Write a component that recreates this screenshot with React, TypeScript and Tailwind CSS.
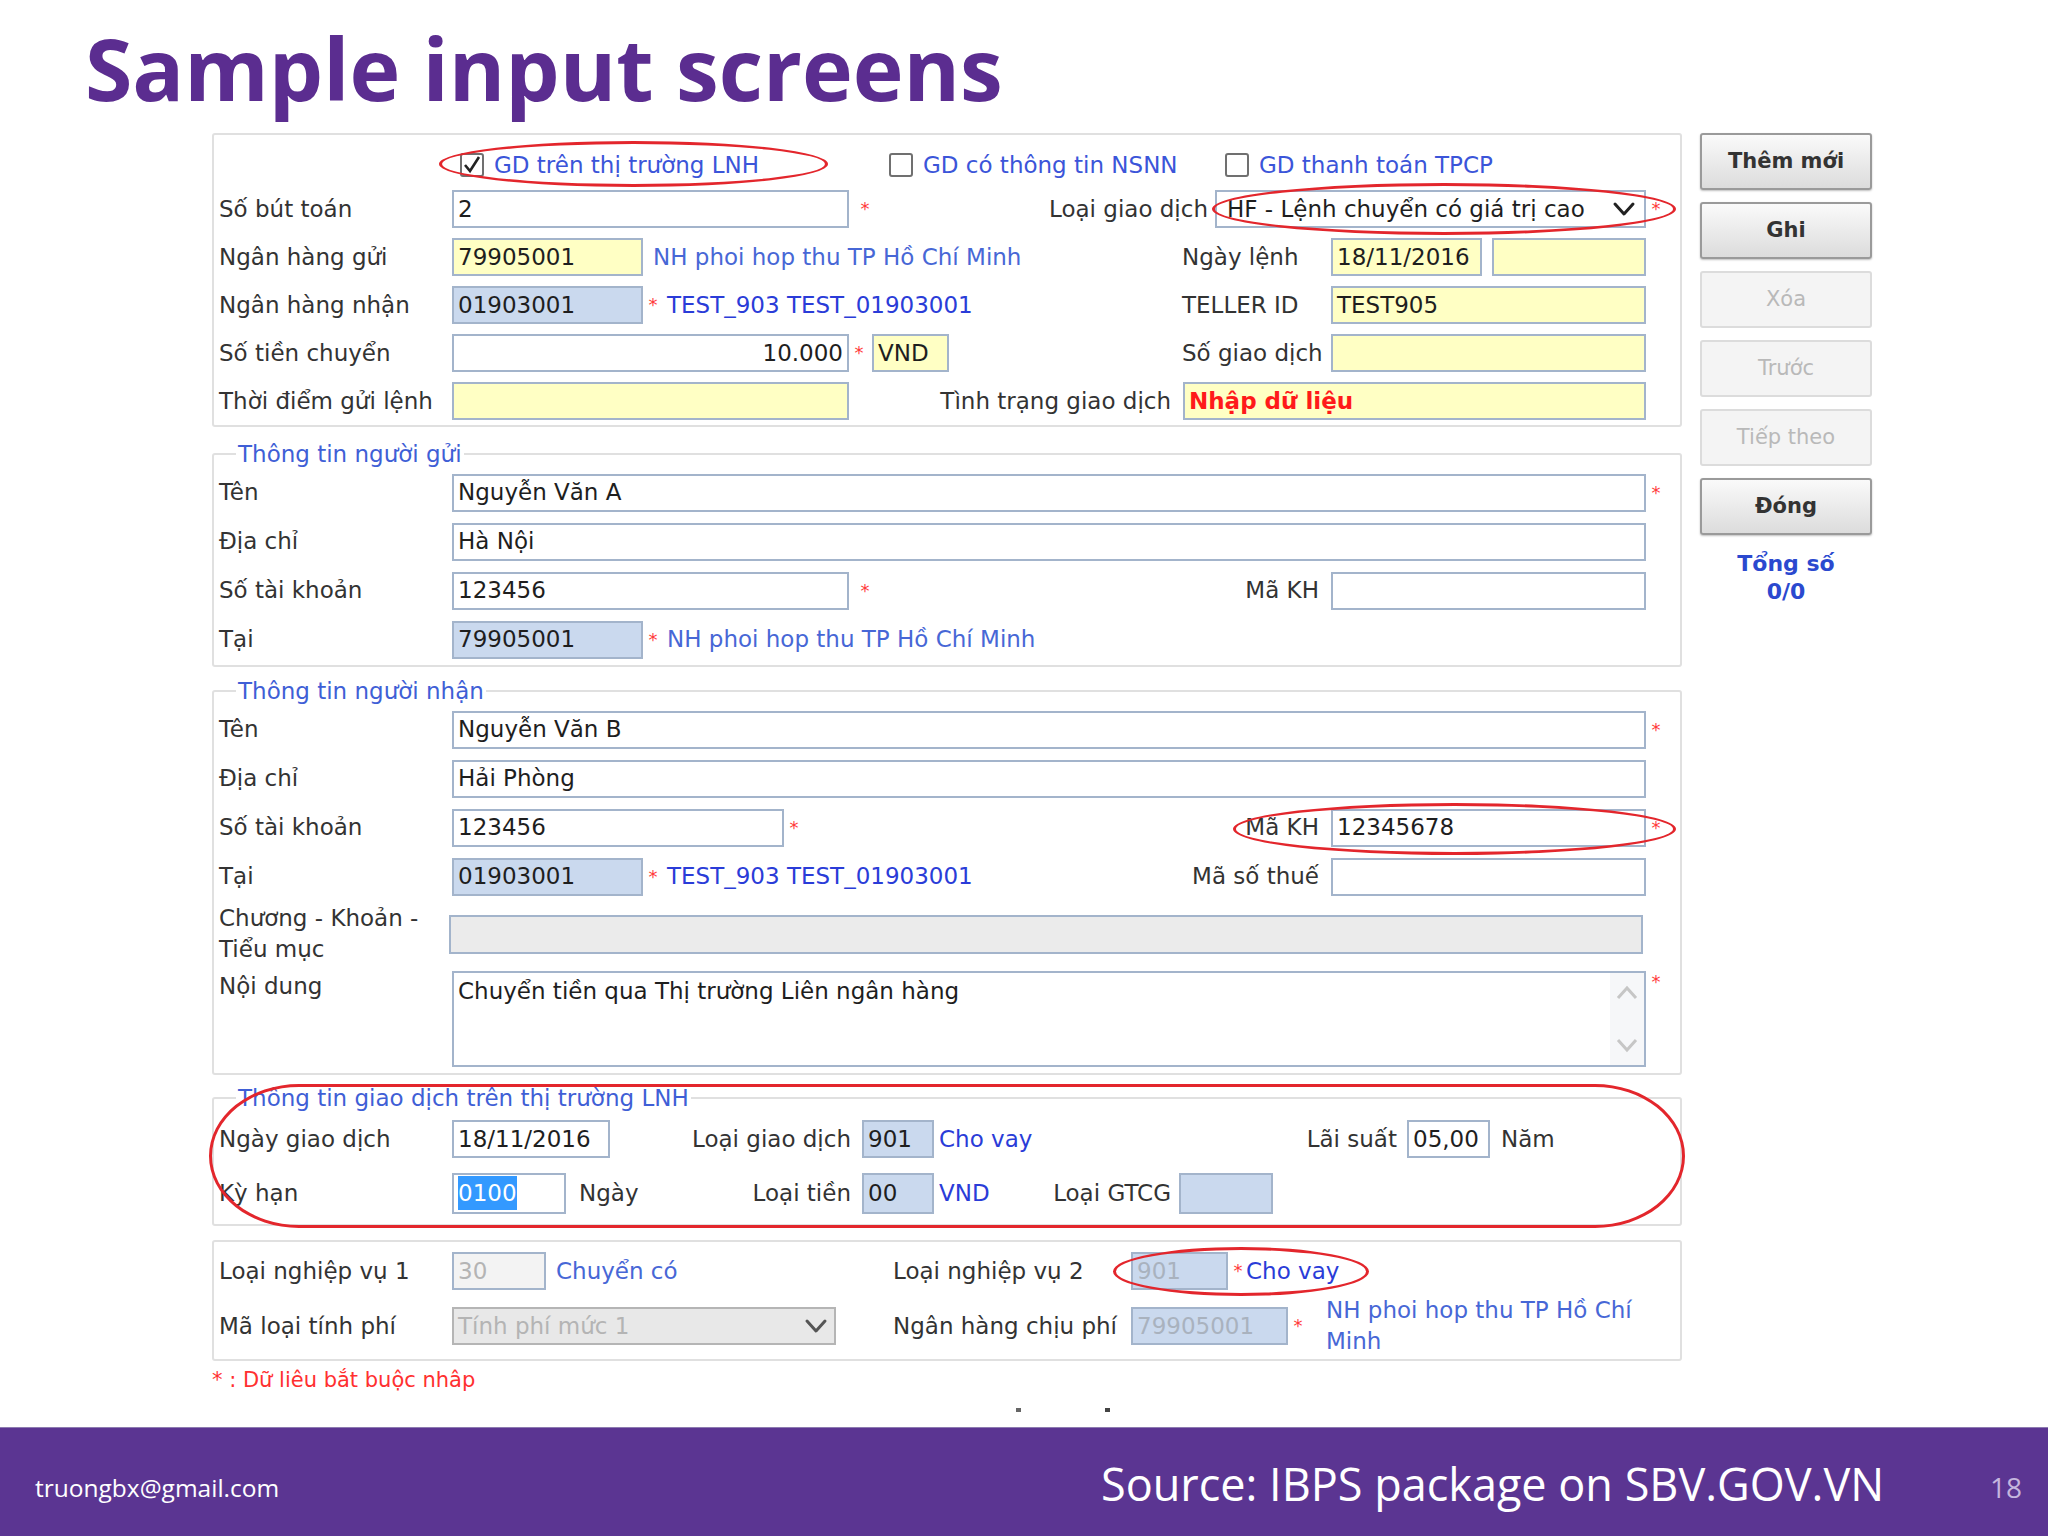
import React from "react";

type BoxProps = {
  w: string;
  bg?: string;
  h?: string;
  className?: string;
  children?: React.ReactNode;
};

function Box({ w, bg = "bg-white", h = "h-[38px]", className = "", children }: BoxProps) {
  return (
    <div
      className={`${w} ${h} ${bg} shrink-0 border-2 border-[#a3b4cb] px-[4px] flex items-center text-[23px] text-[#1e1e1e] whitespace-nowrap overflow-hidden ${className}`}
    >
      {children}
    </div>
  );
}

function Ast({ className = "" }: { className?: string }) {
  return (
    <span className={`w-[20px] shrink-0 text-center text-[18px] leading-none text-[#ff3b3b] ${className}`}>*</span>
  );
}

function NoAst() {
  return <span className="w-[20px] shrink-0" />;
}

function Label({ children, className = "" }: { children: React.ReactNode; className?: string }) {
  return <div className={`w-[233px] shrink-0 text-[23px] text-[#333] whitespace-nowrap ${className}`}>{children}</div>;
}

function Chevron({ color = "#222" }: { color?: string }) {
  return (
    <svg width="24" height="16" viewBox="0 0 24 16" className="shrink-0">
      <path d="M3 3 L12 13 L21 3" stroke={color} strokeWidth="3" fill="none" strokeLinecap="round" strokeLinejoin="round" />
    </svg>
  );
}

function Check({ checked = false, label, w = "" }: { checked?: boolean; label: string; w?: string }) {
  return (
    <div className={`flex items-center shrink-0 ${w}`}>
      <div className="w-[24px] h-[24px] border-2 border-[#707070] rounded-[3px] bg-white flex items-center justify-center">
        {checked && (
          <svg width="20" height="20" viewBox="0 0 20 20">
            <path d="M3 10 L8 16 L17 2" stroke="#222" strokeWidth="2.6" fill="none" />
          </svg>
        )}
      </div>
      <span className="ml-[10px] text-[23px] text-[#3b55d9] whitespace-nowrap">{label}</span>
    </div>
  );
}

function Btn({ children, disabled = false }: { children: React.ReactNode; disabled?: boolean }) {
  return disabled ? (
    <div className="h-[57px] border-2 border-[#dcdcdc] rounded-[3px] bg-[#f4f4f4] flex items-center justify-center text-[21px] font-normal text-[#b9b9b9]">
      {children}
    </div>
  ) : (
    <div className="h-[57px] border-2 border-[#9a9a9a] rounded-[3px] bg-linear-to-b from-[#fafafa] to-[#dcdcdc] flex items-center justify-center text-[21px] font-bold text-[#333] shadow-[0_1px_2px_rgba(0,0,0,0.25)]">
      {children}
    </div>
  );
}

const row = "h-[48px] flex items-center";
const row49 = "h-[49px] flex items-center";

export default function App() {
  return (
    <div className="relative w-[2048px] h-[1536px] bg-white overflow-hidden flex flex-col">
      <div className="h-[1427px] flex flex-col">
        <h1 className="pl-[85px] pt-[25px] text-[86px] leading-none font-bold text-[#5b2d90] font-['Open_Sans',sans-serif]">
          Sample input screens
        </h1>

        <div className="flex mt-[22px] pl-[212px] font-['DejaVu_Sans',sans-serif]">
          {/* FORM COLUMN */}
          <div className="w-[1470px] flex flex-col">
            {/* Panel A */}
            <div className="border-2 border-[#e0e0e0] rounded-[3px] pl-[5px] pr-[14px] pt-[10px]">
              <div className="h-[40px] flex items-center">
                <div className="w-[241px] shrink-0" />
                <Check checked label="GD trên thị trường LNH" w="w-[429px]" />
                <Check label="GD có thông tin NSNN" w="w-[336px]" />
                <Check label="GD thanh toán TPCP" />
              </div>

              <div className={row}>
                <Label>Số bút toán</Label>
                <Box w="w-[397px]">2</Box>
                <Ast className="ml-[6px]" />
                <div className="ml-auto flex items-center">
                  <div className="text-[23px] text-[#333] whitespace-nowrap">Loại giao dịch</div>
                  <Box w="w-[431px]" className="ml-[7px] justify-between pl-[10px] pr-[8px] border-[#8a8a8a]">
                    <span>HF - Lệnh chuyển có giá trị cao</span>
                    <Chevron />
                  </Box>
                  <Ast />
                </div>
              </div>

              <div className={row}>
                <Label>Ngân hàng gửi</Label>
                <Box w="w-[191px]" bg="bg-[#ffffc4]">79905001</Box>
                <span className="ml-[10px] text-[23px] text-[#4767d6] whitespace-nowrap">NH phoi hop thu TP Hồ Chí Minh</span>
                <div className="ml-auto flex items-center">
                  <div className="w-[149px] text-[23px] text-[#333]">Ngày lệnh</div>
                  <Box w="w-[151px]" bg="bg-[#ffffc4]">18/11/2016</Box>
                  <Box w="w-[154px]" bg="bg-[#ffffc4]" className="ml-[10px]" />
                  <NoAst />
                </div>
              </div>

              <div className={row}>
                <Label>Ngân hàng nhận</Label>
                <Box w="w-[191px]" bg="bg-[#cad9ee]">01903001</Box>
                <Ast />
                <span className="ml-[4px] text-[23px] text-[#2a3cd8] whitespace-nowrap">TEST_903 TEST_01903001</span>
                <div className="ml-auto flex items-center">
                  <div className="w-[149px] text-[23px] text-[#333]">TELLER ID</div>
                  <Box w="w-[315px]" bg="bg-[#ffffc4]">TEST905</Box>
                  <NoAst />
                </div>
              </div>

              <div className={row}>
                <Label>Số tiền chuyển</Label>
                <Box w="w-[397px]" className="justify-end">10.000</Box>
                <Ast />
                <Box w="w-[77px]" bg="bg-[#ffffc4]" className="ml-[3px]">VND</Box>
                <div className="ml-auto flex items-center">
                  <div className="w-[149px] text-[23px] text-[#333] whitespace-nowrap">Số giao dịch</div>
                  <Box w="w-[315px]" bg="bg-[#ffffc4]" />
                  <NoAst />
                </div>
              </div>

              <div className={row}>
                <Label>Thời điểm gửi lệnh</Label>
                <Box w="w-[397px]" bg="bg-[#ffffc4]" />
                <div className="ml-auto flex items-center">
                  <div className="pr-[12px] text-[23px] text-[#333] whitespace-nowrap">Tình trạng giao dịch</div>
                  <Box w="w-[463px]" bg="bg-[#ffffc4]">
                    <span className="font-bold text-[#ff1a1a]">Nhập dữ liệu</span>
                  </Box>
                  <NoAst />
                </div>
              </div>
            </div>

            {/* Panel B - sender */}
            <fieldset className="mt-[13px] border-2 border-[#e0e0e0] rounded-[3px] pl-[5px] pr-[14px] pb-[1px]">
              <legend className="ml-[17px] px-[2px] text-[23px] leading-[28px] text-[#3f5fd6]">Thông tin người gửi</legend>
              <div className={row49}>
                <Label>Tên</Label>
                <Box w="w-[1194px]">Nguyễn Văn A</Box>
                <Ast />
              </div>
              <div className={row49}>
                <Label>Địa chỉ</Label>
                <Box w="w-[1194px]">Hà Nội</Box>
                <NoAst />
              </div>
              <div className={row49}>
                <Label>Số tài khoản</Label>
                <Box w="w-[397px]">123456</Box>
                <Ast className="ml-[6px]" />
                <div className="ml-auto flex items-center">
                  <div className="pr-[12px] text-[23px] text-[#333] whitespace-nowrap">Mã KH</div>
                  <Box w="w-[315px]" />
                  <NoAst />
                </div>
              </div>
              <div className={row49}>
                <Label>Tại</Label>
                <Box w="w-[191px]" bg="bg-[#cad9ee]">79905001</Box>
                <Ast />
                <span className="ml-[4px] text-[23px] text-[#4767d6] whitespace-nowrap">NH phoi hop thu TP Hồ Chí Minh</span>
              </div>
            </fieldset>

            {/* Panel C - receiver */}
            <fieldset className="mt-[10px] border-2 border-[#e0e0e0] rounded-[3px] pl-[5px] pr-[14px] pb-[6px]">
              <legend className="ml-[17px] px-[2px] text-[23px] leading-[28px] text-[#3f5fd6]">Thông tin người nhận</legend>
              <div className={row49}>
                <Label>Tên</Label>
                <Box w="w-[1194px]">Nguyễn Văn B</Box>
                <Ast />
              </div>
              <div className={row49}>
                <Label>Địa chỉ</Label>
                <Box w="w-[1194px]">Hải Phòng</Box>
                <NoAst />
              </div>
              <div className={row49}>
                <Label>Số tài khoản</Label>
                <Box w="w-[332px]">123456</Box>
                <Ast />
                <div className="ml-auto flex items-center">
                  <div className="pr-[12px] text-[23px] text-[#333] whitespace-nowrap">Mã KH</div>
                  <Box w="w-[315px]">12345678</Box>
                  <Ast />
                </div>
              </div>
              <div className={row49}>
                <Label>Tại</Label>
                <Box w="w-[191px]" bg="bg-[#cad9ee]">01903001</Box>
                <Ast />
                <span className="ml-[4px] text-[23px] text-[#2a3cd8] whitespace-nowrap">TEST_903 TEST_01903001</span>
                <div className="ml-auto flex items-center">
                  <div className="pr-[12px] text-[23px] text-[#333] whitespace-nowrap">Mã số thuế</div>
                  <Box w="w-[315px]" />
                  <NoAst />
                </div>
              </div>
              <div className="h-[66px] flex items-center">
                <Label className="leading-[31px]">
                  Chương - Khoản -
                  <br />
                  Tiểu mục
                </Label>
                <Box w="w-[1194px]" h="h-[39px]" bg="bg-[#ebebeb]" className="-ml-[3px]" />
              </div>
              <div className="flex items-start">
                <Label className="mt-[5px] leading-[28px]">Nội dung</Label>
                <div className="mt-[4px] w-[1194px] h-[96px] shrink-0 border-2 border-[#a3b4cb] bg-white flex">
                  <div className="flex-1 pl-[4px] pt-[4px] text-[23px] leading-[28px] text-[#1e1e1e]">
                    Chuyển tiền qua Thị trường Liên ngân hàng
                  </div>
                  <div className="w-[34px] bg-[#f6f7f9] flex flex-col items-center justify-between py-[12px]">
                    <svg width="24" height="16" viewBox="0 0 24 16">
                      <path d="M3 13 L12 3 L21 13" stroke="#c6c6c6" strokeWidth="3" fill="none" />
                    </svg>
                    <svg width="24" height="16" viewBox="0 0 24 16">
                      <path d="M3 3 L12 13 L21 3" stroke="#c6c6c6" strokeWidth="3" fill="none" />
                    </svg>
                  </div>
                </div>
                <Ast className="mt-[6px]" />
              </div>
            </fieldset>

            {/* Panel D - LNH */}
            <fieldset className="mt-[9px] border-2 border-[#e0e0e0] rounded-[3px] pl-[5px] pr-[14px] pb-[4px]">
              <legend className="ml-[17px] px-[2px] text-[23px] leading-[28px] text-[#3f5fd6]">Thông tin giao dịch trên thị trường LNH</legend>
              <div className="h-[54px] flex items-center">
                <Label>Ngày giao dịch</Label>
                <Box w="w-[158px]">18/11/2016</Box>
                <div className="w-[252px] shrink-0 pr-[11px] text-right text-[23px] text-[#333] whitespace-nowrap">Loại giao dịch</div>
                <Box w="w-[72px]" bg="bg-[#cad9ee]">901</Box>
                <div className="w-[366px] shrink-0 pl-[5px] text-[23px] text-[#2a3cd8]">Cho vay</div>
                <div className="w-[107px] shrink-0 pr-[10px] text-right text-[23px] text-[#333] whitespace-nowrap">Lãi suất</div>
                <Box w="w-[83px]">05,00</Box>
                <span className="ml-[11px] text-[23px] text-[#333]">Năm</span>
              </div>
              <div className="h-[54px] flex items-center">
                <Label>Kỳ hạn</Label>
                <Box w="w-[114px]" h="h-[41px]">
                  <span className="bg-[#3399ff] text-white">0100</span>
                </Box>
                <div className="w-[296px] shrink-0 flex justify-between text-[23px] text-[#333]">
                  <span className="pl-[13px]">Ngày</span>
                  <span className="pr-[11px]">Loại tiền</span>
                </div>
                <Box w="w-[72px]" h="h-[41px]" bg="bg-[#cad9ee]">00</Box>
                <div className="w-[245px] shrink-0 flex justify-between text-[23px]">
                  <span className="pl-[5px] text-[#2a3cd8]">VND</span>
                  <span className="pr-[8px] text-[#333]">Loại GTCG</span>
                </div>
                <Box w="w-[94px]" h="h-[41px]" bg="bg-[#cad9ee]" />
              </div>
            </fieldset>

            {/* Panel E */}
            <div className="mt-[14px] border-2 border-[#e0e0e0] rounded-[3px] pl-[5px] pr-[14px] pt-[3px] pb-[4px]">
              <div className="h-[52px] flex items-center">
                <Label>Loại nghiệp vụ 1</Label>
                <Box w="w-[94px]" bg="bg-[#f3f3f3]" className="text-[#b4b4b4]">30</Box>
                <div className="w-[347px] shrink-0 pl-[10px] text-[23px] text-[#4767d6]">Chuyển có</div>
                <div className="w-[238px] shrink-0 text-[23px] text-[#333] whitespace-nowrap">Loại nghiệp vụ 2</div>
                <Box w="w-[97px]" bg="bg-[#cad9ee]" className="text-[#a9b2be]">901</Box>
                <Ast />
                <span className="ml-[-2px] text-[23px] text-[#2a3cd8]">Cho vay</span>
              </div>
              <div className="h-[58px] flex items-center">
                <Label>Mã loại tính phí</Label>
                <Box w="w-[384px]" bg="bg-[#e8e8e8]" className="justify-between pr-[6px] text-[#b4b4b4] border-[#b5b5b5]">
                  <span>Tính phí mức 1</span>
                  <Chevron color="#555" />
                </Box>
                <div className="w-[57px] shrink-0" />
                <div className="w-[238px] shrink-0 text-[23px] text-[#333] whitespace-nowrap">Ngân hàng chịu phí</div>
                <Box w="w-[157px]" bg="bg-[#cad9ee]" className="text-[#a9b2be]">79905001</Box>
                <Ast />
                <div className="ml-[18px] w-[330px] text-[23px] leading-[31px] text-[#4767d6]">NH phoi hop thu TP Hồ Chí Minh</div>
              </div>
            </div>

            <div className="mt-[5px] text-[21px] leading-[28px] text-[#ff3030]">* : Dữ liêu bắt buộc nhâp</div>
            <div className="flex mt-[14px] pl-[804px]">
              <div className="w-[5px] h-[4px] bg-[#666]" />
              <div className="ml-[84px] w-[5px] h-[4px] bg-[#444]" />
            </div>
          </div>

          {/* BUTTON COLUMN */}
          <div className="ml-[18px] w-[172px] flex flex-col gap-[12px]">
            <Btn>Thêm mới</Btn>
            <Btn>Ghi</Btn>
            <Btn disabled>Xóa</Btn>
            <Btn disabled>Trước</Btn>
            <Btn disabled>Tiếp theo</Btn>
            <Btn>Đóng</Btn>
            <div className="mt-[3px] text-center text-[22px] leading-[28px] font-bold text-[#2b49cf]">
              Tổng số
              <br />
              0/0
            </div>
          </div>
        </div>
      </div>

      <footer className="h-[109px] bg-[#5b3592] border-t border-[#8d7bb0] flex items-center text-white font-['Open_Sans',sans-serif]">
        <div className="pl-[35px] w-[1101px] shrink-0 pt-[12px] text-[24.5px]">truongbx@gmail.com</div>
        <div className="pt-[4px] text-[45px] whitespace-nowrap">Source: IBPS package on SBV.GOV.VN</div>
        <div className="ml-auto pr-[26px] pt-[10px] text-[28px] text-[#c5b6de]">18</div>
      </footer>

      {/* Red annotation ellipses */}
      <div className="absolute left-[439px] top-[141px] w-[389px] h-[46px] border-[3px] border-[#e3262c] rounded-[50%]" />
      <div className="absolute left-[1212px] top-[183px] w-[464px] h-[52px] border-[3px] border-[#e3262c] rounded-[50%]" />
      <div className="absolute left-[1233px] top-[803px] w-[443px] h-[52px] border-[3px] border-[#e3262c] rounded-[50%]" />
      <div className="absolute left-[209px] top-[1084px] w-[1476px] h-[144px] border-[3px] border-[#e3262c] rounded-[90px/72px]" />
      <div className="absolute left-[1113px] top-[1247px] w-[256px] h-[49px] border-[3px] border-[#e3262c] rounded-[50%]" />
    </div>
  );
}
